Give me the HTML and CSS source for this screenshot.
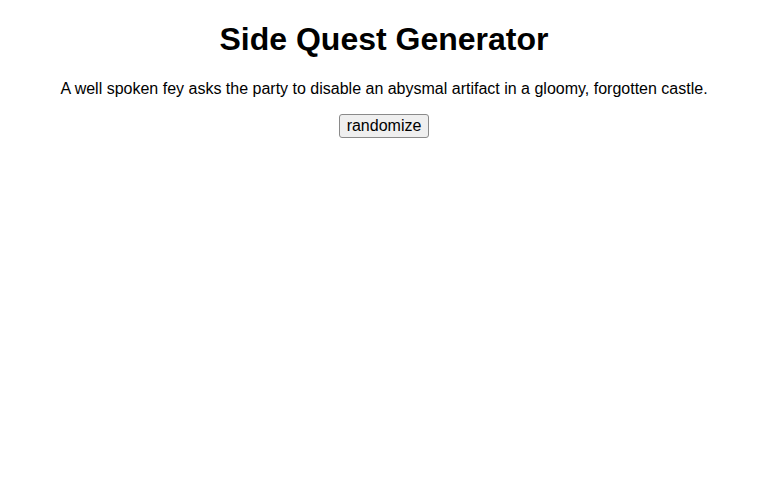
FILE: index.html
```html
<!DOCTYPE html>
<html lang="en">
<head>
<meta charset="utf-8">
<title>Side Quest Generator</title>
<link rel="stylesheet" href="styles.css">
</head>
<body class="page">
<main class="app">
  <h1 class="title">Side Quest Generator</h1>
  <p class="quest">A well spoken fey asks the party to disable an abysmal artifact in a gloomy, forgotten castle.</p>
  <button class="randomize" type="button">randomize</button>
</main>
</body>
</html>
```
FILE: styles.css
```css
html, body {
  background: #ffffff;
}
.page {
  margin: 0 8px;
  font-family: "Liberation Sans", Arial, sans-serif;
  color: #000000;
}
.app {
  text-align: center;
}
.title {
  font-size: 32px;
  font-weight: bold;
  margin: 21.44px 0;
}
.quest {
  font-size: 16px;
  margin: 16px 0;
}
.randomize {
  font-family: "Liberation Sans", Arial, sans-serif;
  font-size: 16px;
  line-height: 18px;
  color: #000000;
  background: #efefef;
  border: 1px solid #8a8a8a;
  border-radius: 3px;
  padding: 2px 7px;
}
```
